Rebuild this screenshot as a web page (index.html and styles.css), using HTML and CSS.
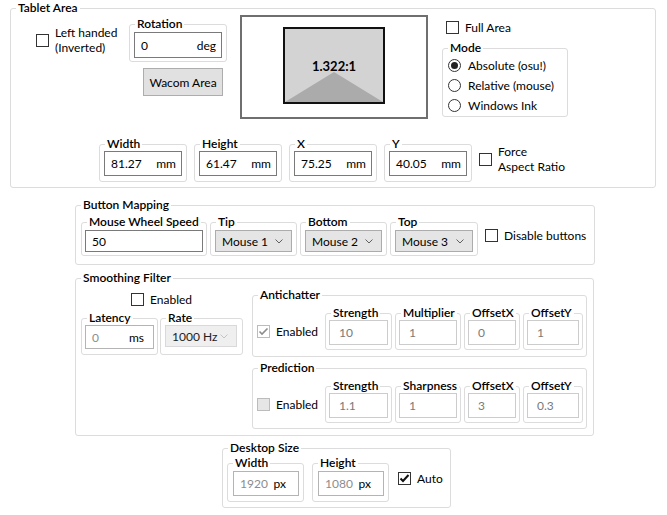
FILE: index.html
```html
<!DOCTYPE html>
<html lang="en">
<head>
    <meta charset="UTF-8">
    <meta name="viewport" content="width=device-width, initial-scale=1.0">
    <title>Tablet Settings</title>
    <link rel="stylesheet" href="styles.css">
</head>
<body>
    <!-- Tablet area -->
    <fieldset class="group tablet">
        <legend>Tablet Area</legend>
        <div class="tablet-top">
            <label class="check left-handed"><span class="box"></span><span>Left handed<br>(Inverted)</span></label>
            <div class="rotation-col">
                <fieldset class="group sub rotation">
                    <legend>Rotation</legend>
                    <div class="field tall"><span>0</span><span class="unit">deg</span></div>
                </fieldset>
                <button class="btn">Wacom Area</button>
            </div>
            <div class="preview">
                <div class="area"><span>1.322:1</span></div>
            </div>
            <div class="mode-col">
                <label class="check full-area"><span class="box"></span>Full Area</label>
                <fieldset class="group mode">
                    <legend>Mode</legend>
                    <label class="radio"><span class="dot on"></span>Absolute (osu!)</label>
                    <label class="radio"><span class="dot"></span>Relative (mouse)</label>
                    <label class="radio"><span class="dot"></span>Windows Ink</label>
                </fieldset>
            </div>
        </div>
        <div class="tablet-bottom">
            <fieldset class="group sub dim first">
                <legend>Width</legend>
                <div class="field"><span>81.27</span><span class="unit">mm</span></div>
            </fieldset>
            <fieldset class="group sub dim">
                <legend>Height</legend>
                <div class="field"><span>61.47</span><span class="unit">mm</span></div>
            </fieldset>
            <fieldset class="group sub dim">
                <legend>X</legend>
                <div class="field"><span>75.25</span><span class="unit">mm</span></div>
            </fieldset>
            <fieldset class="group sub dim">
                <legend>Y</legend>
                <div class="field"><span>40.05</span><span class="unit">mm</span></div>
            </fieldset>
            <label class="check force"><span class="box"></span><span>Force<br>Aspect Ratio</span></label>
        </div>
    </fieldset>

    <!-- Button mapping -->
    <fieldset class="group buttons">
        <legend>Button Mapping</legend>
        <div class="button-row">
            <fieldset class="group sub wheel">
                <legend>Mouse Wheel Speed</legend>
                <div class="text">50</div>
            </fieldset>
            <fieldset class="group sub pick">
                <legend>Tip</legend>
                <div class="combo">Mouse 1<svg width="8" height="5" viewBox="0 0 8 5"><polyline points="0.5,0.5 4,4 7.5,0.5" fill="none" stroke="#606060"/></svg></div>
            </fieldset>
            <fieldset class="group sub pick">
                <legend>Bottom</legend>
                <div class="combo">Mouse 2<svg width="8" height="5" viewBox="0 0 8 5"><polyline points="0.5,0.5 4,4 7.5,0.5" fill="none" stroke="#606060"/></svg></div>
            </fieldset>
            <fieldset class="group sub pick top">
                <legend>Top</legend>
                <div class="combo">Mouse 3<svg width="8" height="5" viewBox="0 0 8 5"><polyline points="0.5,0.5 4,4 7.5,0.5" fill="none" stroke="#606060"/></svg></div>
            </fieldset>
            <label class="check disable-btns"><span class="box"></span>Disable buttons</label>
        </div>
    </fieldset>

    <!-- Smoothing -->
    <fieldset class="group smoothing">
        <legend>Smoothing Filter</legend>
        <div class="smooth-body">
            <div class="smooth-left">
                <label class="check smooth-enabled"><span class="box"></span>Enabled</label>
                <div class="smooth-row">
                    <fieldset class="group sub latency">
                        <legend>Latency</legend>
                        <div class="field faded"><span class="grey">0</span><span class="unit">ms</span></div>
                    </fieldset>
                    <fieldset class="group sub rate">
                        <legend>Rate</legend>
                        <div class="combo off">1000 Hz<svg width="8" height="5" viewBox="0 0 8 5"><polyline points="0.5,0.5 4,4 7.5,0.5" fill="none" stroke="#c4c4c4"/></svg></div>
                    </fieldset>
                </div>
            </div>
            <div class="smooth-right">
                <fieldset class="group filter">
                    <legend>Antichatter</legend>
                    <div class="filter-row">
                        <label class="check off-state"><span class="box"><svg width="11" height="11" viewBox="0 0 11 11"><polyline points="1.5,5.5 4,8 9.5,2.5" fill="none" stroke="#8c8c8c" stroke-width="1.6"/></svg></span>Enabled</label>
                        <fieldset class="group sub p1"><legend>Strength</legend><div class="text off">10</div></fieldset>
                        <fieldset class="group sub p2"><legend>Multiplier</legend><div class="text off">1</div></fieldset>
                        <fieldset class="group sub p3"><legend>OffsetX</legend><div class="text off">0</div></fieldset>
                        <fieldset class="group sub p4"><legend>OffsetY</legend><div class="text off">1</div></fieldset>
                    </div>
                </fieldset>
                <fieldset class="group filter prediction">
                    <legend>Prediction</legend>
                    <div class="filter-row">
                        <label class="check off-state"><span class="box shaded"></span>Enabled</label>
                        <fieldset class="group sub p1"><legend>Strength</legend><div class="text off">1.1</div></fieldset>
                        <fieldset class="group sub p2"><legend>Sharpness</legend><div class="text off">1</div></fieldset>
                        <fieldset class="group sub p3"><legend>OffsetX</legend><div class="text off">3</div></fieldset>
                        <fieldset class="group sub p4"><legend>OffsetY</legend><div class="text off">0.3</div></fieldset>
                    </div>
                </fieldset>
            </div>
        </div>
    </fieldset>

    <!-- Desktop size -->
    <fieldset class="group desktop">
        <legend>Desktop Size</legend>
        <div class="desktop-row">
            <fieldset class="group sub screen first">
                <legend>Width</legend>
                <div class="field faded wide"><span class="grey">1920</span><span class="unit">px</span></div>
            </fieldset>
            <fieldset class="group sub screen">
                <legend>Height</legend>
                <div class="field faded wide"><span class="grey">1080</span><span class="unit">px</span></div>
            </fieldset>
            <label class="check auto"><span class="box"><svg width="11" height="11" viewBox="0 0 11 11"><polyline points="1.5,5.5 4,8 9.5,2" fill="none" stroke="#111" stroke-width="2"/></svg></span>Auto</label>
        </div>
    </fieldset>
</body>
</html>
```

FILE: styles.css
```css
* { box-sizing: border-box; }

body {
    margin: 0;
    font-family: Lato, "Segoe UI", sans-serif;
    font-size: 12px;
    color: #000;
    background: #fff;
    overflow: hidden;
}

/* group boxes */
.group {
    margin: 0;
    padding: 0;
    border: 1px solid #dcdcdc;
    border-radius: 3px;
    min-width: 0;
}
.group legend {
    margin-left: 5px;
    padding: 0 2px;
    line-height: 14px;
    font-weight: 600;
    white-space: nowrap;
}

/* checkboxes and radios */
.check {
    display: flex;
    align-items: center;
    line-height: 15px;
    white-space: nowrap;
}
.check .box {
    flex: none;
    width: 13px;
    height: 13px;
    border: 1px solid #333;
    background: #fff;
    margin-right: 6px;
    display: flex;
    align-items: center;
    justify-content: center;
}
.check.off-state .box { border-color: #bcbcbc; }
.check .box.shaded { background: #e6e6e6; }

.radio {
    display: flex;
    align-items: center;
    height: 20px;
    margin-left: 5px;
}
.dot {
    width: 13px;
    height: 13px;
    border: 1px solid #333;
    border-radius: 50%;
    margin-right: 7px;
    display: flex;
    align-items: center;
    justify-content: center;
}
.dot.on::after {
    content: '';
    width: 7px;
    height: 7px;
    border-radius: 50%;
    background: #222;
}

/* inputs */
.field {
    display: flex;
    align-items: center;
    justify-content: space-between;
    height: 25px;
    margin: 0 4px;
    border: 1px solid #7a7a7a;
    padding: 0 5px 0 6px;
    background: #fff;
}
.field.tall { height: 26px; }
.field.faded { border-color: #b4b4b4; padding-right: 9px; }
.field.wide { padding-right: 12px; }
.grey { color: #8d8d8d; }

.text {
    display: flex;
    align-items: center;
    height: 22px;
    margin: 0 4px;
    border: 1px solid #7a7a7a;
    padding: 0 6px;
}
.text.off {
    height: 25px;
    margin: 0 3px;
    border-color: #cccccc;
    color: #7a7a7a;
    padding: 0 9px;
}

.combo {
    display: flex;
    align-items: center;
    justify-content: space-between;
    height: 22px;
    margin: 0 4px;
    border: 1px solid #acacac;
    background: #e5e5e5;
    padding: 0 8px 0 6px;
}
.combo.off {
    background: #efefef;
    border-color: #d9d9d9;
    color: #222;
}

.btn {
    font: inherit;
    width: 80px;
    height: 28px;
    margin: 6px 0 0 14px;
    background: #e1e1e1;
    border: 1px solid #adadad;
    padding: 0;
}

/* tablet area */
.tablet {
    margin: 1px 0 0 10px;
    width: 646px;
    padding-bottom: 5px;
}
.tablet-top {
    display: flex;
    align-items: flex-start;
}
.left-handed {
    width: 93px;
    margin: 10px 0 0 25px;
}
.rotation-col {
    width: 98px;
    margin-top: 2px;
}
.rotation { padding: 1px 0 3px; }

.preview {
    width: 188px;
    height: 104px;
    margin-left: 13px;
    border: 2px solid #6f6f6f;
    display: flex;
    justify-content: center;
    padding-top: 10px;
}
.area {
    position: relative;
    width: 102px;
    height: 77px;
    border: 2px solid #111;
    background: #d3d3d3;
    display: flex;
    align-items: center;
    justify-content: center;
    font-weight: 700;
    font-size: 13px;
}
.area::before {
    content: '';
    position: absolute;
    inset: 0;
    background: #ababab;
    clip-path: polygon(0 100%, 50% 59%, 100% 100%);
}
.area span { position: relative; }

.mode-col {
    width: 126px;
    margin-left: 14px;
}
.full-area { margin: 5px 0 0 4px; }
.mode {
    margin-top: 6px;
    padding-bottom: 1px;
}

.tablet-bottom {
    display: flex;
    align-items: flex-start;
    gap: 7px;
    margin-top: 18px;
}
.dim {
    width: 88px;
    padding-bottom: 5px;
}
.dim.first { margin-left: 88px; }
.force { margin-top: 7px; }

/* button mapping */
.buttons {
    width: 520px;
    margin: 10px 0 0 75px;
    padding-bottom: 8px;
}
.button-row {
    display: flex;
    align-items: flex-start;
    gap: 3px;
    margin: 3px 0 0 5px;
}
.button-row .sub { padding: 1px 0 3px; }
.wheel { width: 126px; }
.wheel .text { margin: 0 3px; }
.pick { width: 87px; }
.pick.top { width: 88px; }
.disable-btns { margin: 13px 0 0 4px; }

/* smoothing */
.smoothing {
    width: 519px;
    margin: 6px 0 0 75px;
    padding-bottom: 6px;
}
.smooth-body {
    display: flex;
    align-items: flex-start;
}
.smooth-left { width: 167px; }
.smooth-enabled { margin: 7px 0 0 55px; }
.smooth-row {
    display: flex;
    gap: 2px;
    margin: 4px 0 0 5px;
}
.latency {
    width: 77px;
    padding-bottom: 5px;
}
.latency .field { height: 24px; margin: 0 3px; }
.rate {
    width: 83px;
    padding-bottom: 5px;
}
.rate .combo { margin: 0 5px 0 4px; }
.smooth-right {
    margin: 3px 0 0 9px;
}
.filter {
    width: 335px;
    padding-bottom: 6px;
}
.prediction {
    margin-top: 4px;
    padding-bottom: 5px;
}
.filter-row {
    display: flex;
    align-items: flex-start;
    gap: 3px;
    margin: 4px 0 0 4px;
}
.filter-row .check {
    width: 65px;
    margin-top: 18px;
}
.filter-row .sub { padding-bottom: 4px; }
.p1 { width: 67px; }
.p2 { width: 66px; }
.p3 { width: 56px; }
.p4 { width: 60px; }

/* desktop size */
.desktop {
    width: 229px;
    margin: 5px 0 0 222px;
    padding-bottom: 5px;
}
.desktop-row {
    display: flex;
    align-items: flex-start;
    gap: 8px;
    margin: 1px 0 0 4px;
}
.screen {
    width: 77px;
    padding: 1px 0 5px;
}
.screen .field { margin: 0 4px 0 5px; }
.auto { margin: 15px 0 0 1px; }
```
